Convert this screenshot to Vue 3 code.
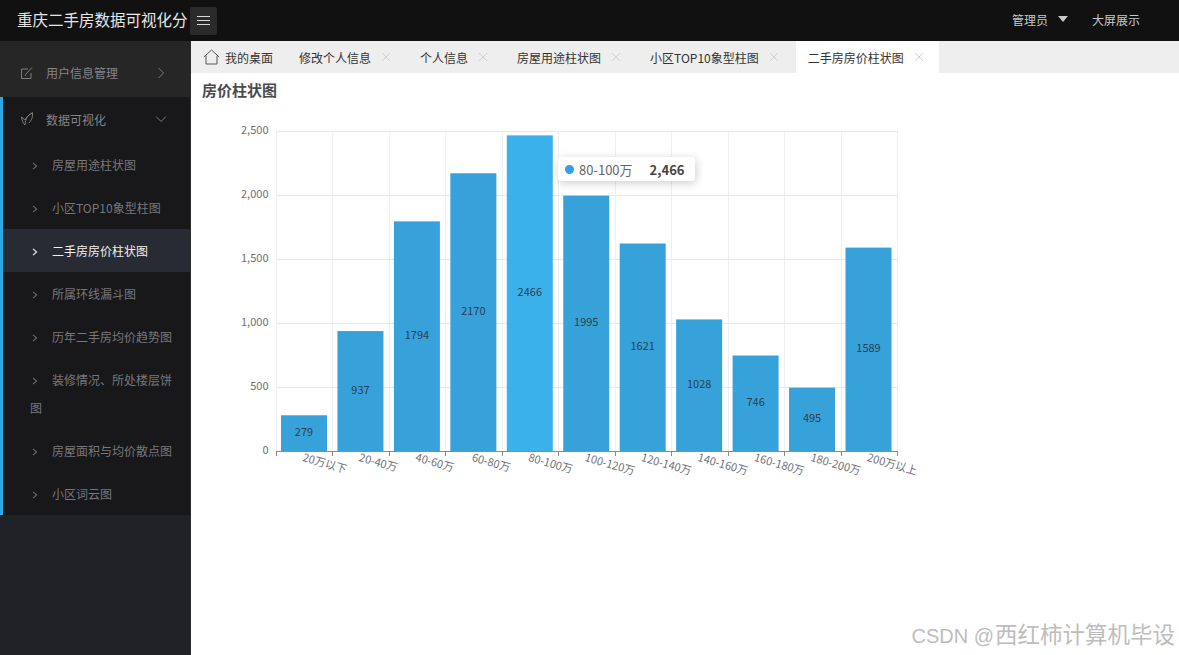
<template>
  <div class="page">
    <header class="topbar">
      <div class="logo">重庆二手房数据可视化分</div>
      <button class="burger" type="button"><span></span><span></span><span></span></button>
      <div class="topbar__right">
        <span class="user">管理员<i class="caret"></i></span>
        <span class="screen">大屏展示</span>
      </div>
    </header>

    <div class="body">
      <aside class="sidebar">
        <div class="menu-head menu-head--top">
          <svg class="menu-icon" viewBox="0 0 14 14" width="14" height="14">
            <path d="M8 3H1.500v9.500H11V7M5.500 8.500 12 1.500" fill="none" stroke="#7c7c7c" stroke-width="1" />
            <path d="M4.600 10 5.300 8l1.200 1z" fill="#7c7c7c" />
          </svg>
          <span class="menu-label">用户信息管理</span>
          <svg class="arrow" viewBox="0 0 8 12" width="8" height="12"><path d="M1.500 1l5 5-5 5" fill="none" stroke="#7c7c7c" stroke-width="1" /></svg>
        </div>
        <div class="group">
          <div class="menu-head menu-head--open">
            <svg class="menu-icon" viewBox="0 0 14 14" width="14" height="14">
              <path d="M12.500.8C8 3 5.500 6 5 13 3 11 1.800 8 1.500 5L5 8C6.500 5 9 2.500 12.500.8c.500 4-1 8-4 10.500" fill="none" stroke="#7c7c7c" stroke-width="1" />
            </svg>
            <span class="menu-label">数据可视化</span>
            <svg class="arrow" viewBox="0 0 12 8" width="12" height="8"><path d="M1 1.500l5 5 5-5" fill="none" stroke="#7c7c7c" stroke-width="1" /></svg>
          </div>
          <ul class="submenu">
            <li v-for="item in subItems" :key="item" :class="{ active: item === activeItem }">
              <svg class="sub-arrow" viewBox="0 0 6 8" width="6" height="8"><path d="M1 .8 4.600 4 1 7.200" fill="none" stroke="currentColor" stroke-width="1.100" /></svg>{{ item }}
            </li>
          </ul>
        </div>
      </aside>

      <main class="main">
        <nav class="tabs">
          <div class="tab tab--home">
            <svg viewBox="0 0 17 16" width="17" height="16">
              <path d="M.8 8 8.500 1l7.700 7M3 6.500V15h11V6.500" fill="none" stroke="#555" stroke-width="1" />
            </svg>
            <span>我的桌面</span>
          </div>
          <div v-for="tab in tabs" :key="tab" class="tab" :class="{ 'tab--active': tab === activeItem }">
            <span>{{ tab }}</span>
            <svg class="close" viewBox="0 0 10 10" width="10" height="10"><path d="M1 1l8 8M9 1l-8 8" stroke="#d0d0d0" stroke-width="1" /></svg>
          </div>
        </nav>

        <section class="content">
          <h2 class="title">房价柱状图</h2>
          <div class="chart">
            <svg width="740" height="385" viewBox="0 0 740 385">
              <g v-for="t in yTicks" :key="t.label">
                <line x1="75.500" :x2="gridRight" :y1="t.y" :y2="t.y" stroke="#e6e8ee" />
                <text class="ylabel" x="67.500" :y="t.y + 2" text-anchor="end">{{ t.label }}</text>
              </g>
              <line v-for="(b, i) in bars" :key="'v' + i" :x1="b.tick" :x2="b.tick" y1="30" y2="350" stroke="#eeeff3" />
              <line :x1="gridRight" :x2="gridRight" y1="30" y2="350" stroke="#eeeff3" />

              <g v-for="b in bars" :key="b.name">
                <rect :x="b.x" :y="b.y" width="46" :height="b.h" :fill="b.hover ? '#3bb1ec' : '#37a2da'" />
                <text class="barlabel" :x="b.x + 23" :y="b.y + b.h / 2 + 3" text-anchor="middle">{{ b.value }}</text>
              </g>

              <line x1="75.500" :x2="gridRight" y1="350.500" y2="350.500" stroke="#8c8c84" />
              <line v-for="(b, i) in bars" :key="'t' + i" :x1="b.tick" :x2="b.tick" y1="350" y2="355" stroke="#8c8c84" />
              <line :x1="gridRight" :x2="gridRight" y1="350" y2="355" stroke="#8c8c84" />

              <text
                v-for="b in bars"
                :key="'l' + b.name"
                class="xlabel"
                :x="b.x + 22"
                y="360"
                :transform="`rotate(16 ${b.x + 22} 356)`"
              >{{ b.name }}</text>
            </svg>
            <div class="tooltip">
              <i class="dot"></i><span class="tooltip__name">80-100万</span><b>2,466</b>
            </div>
          </div>
        </section>
        <div class="watermark"><span class="watermark__latin">CSDN @</span>西红柿计算机毕设</div>
      </main>
    </div>
  </div>
</template>

<script setup>
const activeItem = '二手房房价柱状图'

const subItems = [
  '房屋用途柱状图',
  '小区TOP10象型柱图',
  '二手房房价柱状图',
  '所属环线漏斗图',
  '历年二手房均价趋势图',
  '装修情况、所处楼层饼图',
  '房屋面积与均价散点图',
  '小区词云图',
]

const tabs = ['修改个人信息', '个人信息', '房屋用途柱状图', '小区TOP10象型柱图', '二手房房价柱状图']

const data = [
  ['20万以下', 279],
  ['20-40万', 937],
  ['40-60万', 1794],
  ['60-80万', 2170],
  ['80-100万', 2466],
  ['100-120万', 1995],
  ['120-140万', 1621],
  ['140-160万', 1028],
  ['160-180万', 746],
  ['180-200万', 495],
  ['200万以上', 1589],
]

const step = 56.45
const gridRight = 75.5 + step * 11

const bars = data.map(([name, value], i) => {
  const h = value * 0.128
  return {
    name,
    value,
    h,
    y: 350 - h,
    x: 80 + step * i,
    tick: Math.round(75 + step * i) + 0.5,
    hover: i === 4,
  }
})

const yTicks = [2500, 2000, 1500, 1000, 500, 0].map((v) => ({
  label: v.toLocaleString('en-US'),
  y: 350.5 - v * 0.128,
}))
</script>

<style scoped>
.page {
  width: 1179px;
  height: 655px;
  overflow: hidden;
  display: flex;
  flex-direction: column;
  font-family: "Noto Sans CJK SC", "Liberation Sans", sans-serif;
  background: #fff;
}

.topbar {
  height: 41px;
  flex: none;
  display: flex;
  align-items: center;
  background: #111112;
  color: #ddd;
}
.logo {
  width: 173px;
  padding-left: 17px;
  padding-bottom: 3px;
  font-size: 15.5px;
  white-space: nowrap;
  color: #e6e6e6;
}
.burger {
  width: 27px;
  height: 28px;
  padding: 0;
  border: 0;
  border-radius: 2px;
  background: #2a2a2a;
  display: flex;
  flex-direction: column;
  align-items: center;
  justify-content: center;
  gap: 3px;
}
.burger span {
  width: 13px;
  height: 1px;
  background: #d8d8d8;
}
.topbar__right {
  margin-left: auto;
  padding-right: 39px;
  padding-bottom: 3px;
  display: flex;
  align-items: center;
  gap: 24px;
  font-size: 12px;
  color: #c8c8c8;
}
.user {
  display: flex;
  align-items: center;
}
.caret {
  margin-left: 10px;
  border-left: 5px solid transparent;
  border-right: 5px solid transparent;
  border-top: 6px solid #c8c8c8;
}

.body {
  flex: 1;
  display: flex;
  min-height: 0;
}

.sidebar {
  width: 190px;
  flex: none;
  background: #212225;
  font-size: 12px;
  color: #85858a;
  border-right: 1px solid #2b2c2e;
}
.menu-head {
  height: 46px;
  box-sizing: border-box;
  display: flex;
  align-items: center;
  padding: 0 23px 0 17px;
}
.menu-head--top {
  height: 56px;
  padding: 7px 25px 0 20px;
  background: #262627;
}
.menu-head--open {
  padding-bottom: 2px;
}
.menu-icon {
  flex: none;
}
.menu-label {
  margin-left: 12px;
}
.arrow {
  margin-left: auto;
}
.group {
  background: #18181a;
  border-left: 3px solid #2aa8e4;
}
.submenu {
  list-style: none;
  margin: 0;
  padding: 0;
}
.submenu li {
  padding: 7.5px 12px 7.5px 27px;
  line-height: 28px;
  color: #77777c;
}
.submenu li.active {
  background: #282b33;
  color: #f0f0f0;
}
.sub-arrow {
  margin: 0 14px 0 2px;
  color: #6a6a6e;
}
.active .sub-arrow {
  color: #f0f0f0;
}

.main {
  position: relative;
  flex: 1;
  min-width: 0;
}
.tabs {
  height: 32px;
  display: flex;
  align-items: stretch;
  background: #eeeeee;
  font-size: 12px;
  color: #333;
}
.tab {
  display: flex;
  align-items: center;
  padding: 0 15px 0 12px;
  margin-right: 2px;
  white-space: nowrap;
}
.tab .close {
  margin-left: 10px;
}
.tab--home {
  gap: 5px;
  padding-right: 12px;
}
.tab--active {
  background: #fff;
}

.content {
  padding-left: 11px;
}
.title {
  margin: 0;
  padding-top: 7px;
  padding-bottom: 1px;
  font-size: 15px;
  line-height: 20px;
  font-weight: 700;
  color: #4a4a4a;
}
.chart {
  position: relative;
  width: 740px;
  margin-left: -1px;
}
.chart svg {
  display: block;
}
.ylabel,
.xlabel,
.barlabel {
  font-size: 11px;
  font-family: "Noto Sans CJK SC", "Liberation Sans", sans-serif;
}
.ylabel,
.xlabel {
  fill: #6e7079;
}
.barlabel {
  fill: #2c3e50;
}

.tooltip {
  position: absolute;
  left: 357px;
  top: 56px;
  height: 24px;
  padding: 0 10px 0 7px;
  display: flex;
  align-items: center;
  background: #fff;
  font-size: 13px;
  color: #666;
  border-radius: 3px;
  box-shadow: 1px 2px 10px rgba(0, 0, 0, 0.2);
}
.dot {
  width: 9px;
  height: 9px;
  border-radius: 50%;
  background: #37a2da;
  margin-right: 5px;
}
.tooltip b {
  margin-left: 17px;
  color: #464646;
  font-size: 13px;
}

.watermark {
  position: absolute;
  right: 4px;
  bottom: 5px;
  font-size: 22.5px;
  line-height: 28px;
  color: #bdbdbd;
  white-space: nowrap;
}
.watermark__latin {
  font-family: "Liberation Sans", sans-serif;
  font-size: 20px;
  margin-right: 1px;
}
</style>
